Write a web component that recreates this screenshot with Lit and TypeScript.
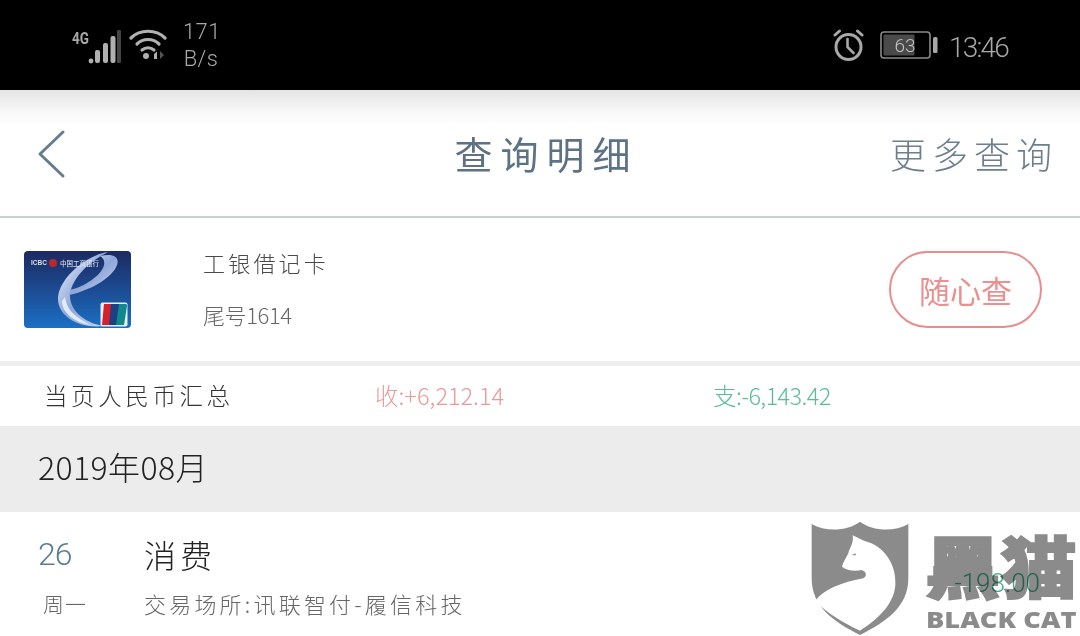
import { LitElement, html, css, svg } from "lit";
import { customElement } from "lit/decorators.js";

const CJK = `"Noto Sans CJK SC", "Noto Sans", sans-serif`;

@customElement("app-root")
export class AppRoot extends LitElement {
  static styles = css`
    :host { display: block; width: 1080px; height: 636px; overflow: hidden; background: #fff; position: relative; font-family: "Noto Sans CJK SC", "Noto Sans", sans-serif; font-weight: 300; }
    * { box-sizing: border-box; }
    .status { height: 90px; background: #000; color: #a8a8a8; display: flex; justify-content: space-between; align-items: center; padding: 0 72px; font-family: Roboto, sans-serif; }
    .group { display: flex; align-items: center; }
    .wifi { margin-left: -3px; }
    .speed { font-size: 22px; line-height: 27px; text-align: center; margin-left: 14px; letter-spacing: .4px; font-weight: 300; width: 36px; }
    .battery { margin-left: 13px; }
    .time { font-size: 28px; font-weight: 300; margin-left: 11px; letter-spacing: -1.8px; margin-top: 4px; }
    .header { height: 128px; border-bottom: 2px solid #c6d1d8; background: linear-gradient(#e4e4e4, #f8f8f8 22px, #fff 36px); display: grid; grid-template-columns: 1fr auto 1fr; align-items: center; padding: 0 28px 0 37px; color: #5d7284; }
    .title { font-size: 38px; letter-spacing: 8px; font-weight: 400; margin-right: -4px; margin-top: -2px; }
    .more { font-size: 36px; letter-spacing: 6px; justify-self: end; color: #6d7f8e; font-weight: 300; margin-right: -6px; }
    .back { display: block; margin-top: 2px; }
    .card { height: 143px; display: flex; align-items: center; padding: 0 38px 0 24px; }
    .card-info { margin-left: 72px; flex: 1; color: #4a4a4a; font-size: 22px; margin-top: -4px; }
    .card-name { letter-spacing: 3.2px; line-height: 32px; margin-bottom: 20px; }
    .card-no { letter-spacing: -.4px; line-height: 32px; color: #666; }
    .btn { width: 153px; height: 77px; border: 2.5px solid #e88c8c; border-radius: 39px; color: #ea9090; font-size: 31px; display: flex; align-items: center; justify-content: center; font-weight: 400; }
    .sep { height: 5px; background: #eeeeee; }
    .summary { height: 60px; display: flex; align-items: center; padding: 0 0 2px 44px; font-size: 23.5px; color: #333; }
    .sum-label { width: 331px; letter-spacing: 3.6px; }
    .income { width: 338px; color: #e99a9a; letter-spacing: 0; }
    .expense { color: #5cbd95; letter-spacing: -.6px; }
    .month { height: 86px; background: #ececec; color: #222; font-size: 32px; padding: 0 0 6px 38px; display: flex; align-items: center; letter-spacing: .4px; }
    .row { height: 124px; display: grid; grid-template-columns: 106px 1fr auto; padding: 20px 40px 0 38px; }
    .day { font-size: 32px; color: #5b7d94; line-height: 44px; font-family: Roboto, sans-serif; font-weight: 300; letter-spacing: -1px; }
    .week { font-size: 21px; color: #666; line-height: 32px; margin-top: 11px; padding-left: 5px; letter-spacing: 1px; }
    .type { font-size: 32px; color: #222; line-height: 44px; letter-spacing: 4px; }
    .place { font-size: 22px; color: #666; line-height: 32px; margin-top: 11px; letter-spacing: 3.2px; }
    .amount { font-size: 26px; color: #48ad8c; font-family: Roboto, sans-serif; font-weight: 300; margin-top: 36px; }
    .mark { position: absolute; right: 0; bottom: 0; width: 300px; height: 126px; display: block; mix-blend-mode: multiply; }
  `;

  private statusLeft() {
    return svg`<svg width="60" height="40" viewBox="0 0 60 40">
      <text x="0" y="19" font-family="Roboto, sans-serif" font-size="16" font-weight="700" fill="#a8a8a8" textLength="17" lengthAdjust="spacingAndGlyphs">4G</text>
      <circle cx="19" cy="36" r="2.4" fill="#b0b0b0"/>
      <rect x="23" y="25" width="5" height="13" rx="2" fill="#b0b0b0"/>
      <rect x="31" y="18" width="5" height="20" rx="2" fill="#b0b0b0"/>
      <rect x="38.500" y="11" width="5" height="27" rx="2" fill="#b0b0b0"/>
      <rect x="45" y="5" width="4" height="33" rx="1" fill="#444"/>
    </svg>`;
  }

  private wifi() {
    return svg`<svg class="wifi" width="40" height="36" viewBox="0 0 40 36">
      <g fill="none" stroke="#b0b0b0" stroke-width="3.200" stroke-linecap="round">
        <path d="M2 11 C11 2 27 2 36 11"/>
        <path d="M8 17 C14 11 24 11 30 17"/>
        <path d="M13 23 C16.500 20 21.500 20 25 23"/>
      </g>
      <circle cx="17" cy="29" r="3" fill="#b0b0b0"/>
      <path d="M25 32 L25 27 L28 24.500 L28 32 Z" fill="#b0b0b0"/>
      <path d="M31 24 L35 28 L31 32 Z" fill="#555"/>
    </svg>`;
  }

  private alarm() {
    return svg`<svg width="34" height="34" viewBox="0 0 34 34">
      <circle cx="15.500" cy="19" r="12.500" fill="none" stroke="#a8a8a8" stroke-width="3"/>
      <path d="M14.500 11 V19 L20.500 25" fill="none" stroke="#a8a8a8" stroke-width="2.600" stroke-linecap="round" stroke-linejoin="round"/>
      <path d="M2 7 L6.500 3 M29 7 L24.500 3" stroke="#a8a8a8" stroke-width="3" stroke-linecap="round"/>
    </svg>`;
  }

  private battery() {
    return svg`<svg class="battery" width="58" height="28" viewBox="0 0 58 28">
      <rect x="1" y="1" width="49" height="26" rx="3" fill="none" stroke="#8a8a8a" stroke-width="1.600"/>
      <rect x="3.500" y="3.500" width="31" height="21" rx="1" fill="#4a4a4a"/>
      <rect x="53" y="6" width="4.500" height="16" rx="1.500" fill="#a8a8a8"/>
      <text x="25" y="21" text-anchor="middle" font-family="Roboto, sans-serif" font-size="19" font-weight="300" fill="#c4c4c4">63</text>
    </svg>`;
  }

  private bankCard() {
    return svg`<svg width="107" height="77" viewBox="0 0 107 77">
      <defs>
        <linearGradient id="cb" x1="0" y1="0" x2="0" y2="1">
          <stop offset="0" stop-color="#1c2a60"/>
          <stop offset=".4" stop-color="#1c4488"/>
          <stop offset="1" stop-color="#1b70c4"/>
        </linearGradient>
        <linearGradient id="sw" x1="0" y1="0" x2="1" y2="1">
          <stop offset="0" stop-color="#f2f5fb"/>
          <stop offset=".5" stop-color="#8ea6d8"/>
          <stop offset="1" stop-color="#cdd9f0"/>
        </linearGradient>
      </defs>
      <rect width="107" height="77" rx="4" fill="url(#cb)"/>
      <path d="M84 1 C62 4 34 28 34 48 C34 66 56 78 80 75 C64 73 47 62 46 46 C46 28 66 10 84 1 Z" fill="url(#sw)"/>
      <path d="M76 5 C88 2 96 5 93 14 C88 28 64 40 45 44 L46 39 C60 36 78 24 80 14 C81 9 79 7 76 5 Z" fill="url(#sw)"/>
      <path d="M38 50 C38 62 50 71 66 74 C52 66 43 60 41 46 Z" fill="#eef3fb" opacity=".85"/>
      <text x="7" y="14" font-family="'Liberation Sans', sans-serif" font-size="6.500" font-weight="700" fill="#d8dff0">ICBC</text>
      <circle cx="29" cy="12" r="4" fill="#b8282e"/>
      <text x="36" y="14.500" font-family="${CJK}" font-size="6.500" font-weight="500" fill="#d8dff0">中国工商银行</text>
      <g transform="translate(78 53)">
        <rect x="-1.500" y="-1.500" width="27" height="24" rx="2" fill="#e8eef4"/>
        <path d="M2 0 H10 L8 21 H0 Z" fill="#d6202c"/>
        <path d="M9 0 H18 L15 21 H7 Z" fill="#1c3f86"/>
        <path d="M17 0 H24 Q25 0 25 2 L22 21 H14 Z" fill="#0f8a8c"/>
      </g>
    </svg>`;
  }

  private watermark() {
    return svg`<svg class="mark" viewBox="0 0 900 378" aria-label="BLACK CAT">
      <path d="M95 42 C140 68 205 62 240 35 C275 62 340 68 385 42 L385 205 C385 290 320 335 240 375 C160 335 95 290 95 205 Z" fill="#8b8b8b"/>
      <path d="M218 76 L252 92 C315 108 350 165 346 225 C342 285 290 330 240 362 C195 340 140 310 106 272 C130 240 180 218 250 205 C262 197 260 186 245 180 C225 185 200 182 186 170 C190 155 198 145 205 130 C208 115 222 100 218 76 Z" fill="#fff"/>
      <path d="M215 136 L226 130 L228 136 Z" fill="#8b8b8b"/>
      <text x="434" y="249" font-family="${CJK}" font-size="200" font-weight="900" fill="#8b8b8b" stroke="#8b8b8b" stroke-width="6" textLength="456" lengthAdjust="spacingAndGlyphs">黑猫</text>
      <text x="438" y="354" font-family="'Open Sans', 'Liberation Sans', sans-serif" font-size="68" font-weight="800" fill="#8b8b8b" textLength="452" lengthAdjust="spacingAndGlyphs">BLACK CAT</text>
    </svg>`;
  }

  render() {
    return html`
      <div class="status">
        <div class="group">${this.statusLeft()}${this.wifi()}<div class="speed">171<br />B/s</div></div>
        <div class="group">${this.alarm()}${this.battery()}<div class="time">13:46</div></div>
      </div>
      <div class="header">
        <svg class="back" width="30" height="50" viewBox="0 0 30 50"><path d="M26 3 L3 25 L26 47" fill="none" stroke="#667d8e" stroke-width="3" stroke-linecap="round" stroke-linejoin="round"/></svg>
        <div class="title">查询明细</div>
        <div class="more">更多查询</div>
      </div>
      <div class="card">
        ${this.bankCard()}
        <div class="card-info">
          <div class="card-name">工银借记卡</div>
          <div class="card-no">尾号1614</div>
        </div>
        <div class="btn">随心查</div>
      </div>
      <div class="sep"></div>
      <div class="summary">
        <div class="sum-label">当页人民币汇总</div>
        <div class="income">收:+6,212.14</div>
        <div class="expense">支:-6,143.42</div>
      </div>
      <div class="month">2019年08月</div>
      <div class="row">
        <div>
          <div class="day">26</div>
          <div class="week">周一</div>
        </div>
        <div>
          <div class="type">消费</div>
          <div class="place">交易场所:讯联智付-履信科技</div>
        </div>
        <div class="amount">-198.00</div>
      </div>
      ${this.watermark()}
    `;
  }
}
